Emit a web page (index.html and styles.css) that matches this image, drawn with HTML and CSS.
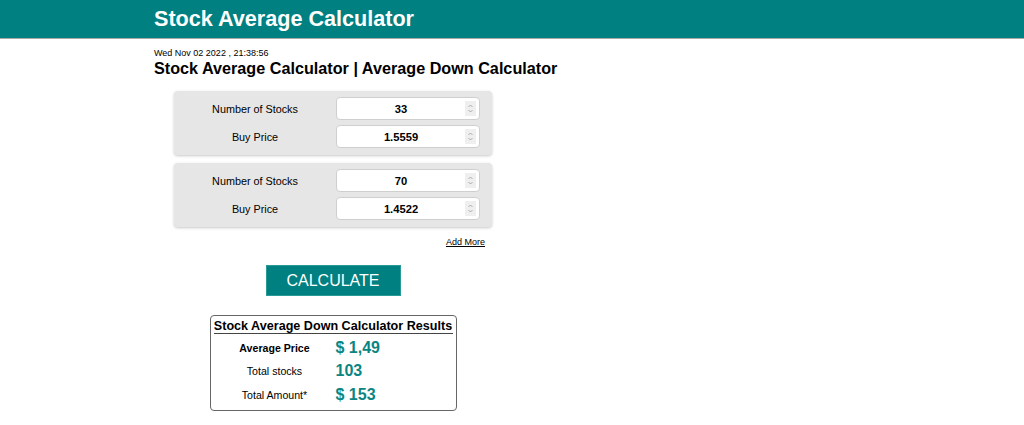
FILE: index.html
```html
<!DOCTYPE html>
<html>
<head>
<meta charset="utf-8">
<link rel="stylesheet" href="styles.css">
</head>
<body>
<header class="topbar"><h1 class="brand">Stock Average Calculator</h1></header>
<main class="page">
  <div class="date">Wed Nov 02 2022 , 21:38:56</div>
  <h2 class="heading">Stock Average Calculator | Average Down Calculator</h2>
  <div class="column">
    <div class="card">
      <div class="row"><span class="label">Number of Stocks</span><div class="field"><span class="val">33</span><span class="spin"><svg width="7" height="11" viewBox="0 0 7 11"><path d="M1.5 4 L3.5 2 L5.5 4 M1.5 7 L3.5 9 L5.5 7" fill="none" stroke="#9a9a9a" stroke-width="0.8"/></svg></span></div></div>
      <div class="row"><span class="label">Buy Price</span><div class="field"><span class="val">1.5559</span><span class="spin"><svg width="7" height="11" viewBox="0 0 7 11"><path d="M1.5 4 L3.5 2 L5.5 4 M1.5 7 L3.5 9 L5.5 7" fill="none" stroke="#9a9a9a" stroke-width="0.8"/></svg></span></div></div>
    </div>
    <div class="card">
      <div class="row"><span class="label">Number of Stocks</span><div class="field"><span class="val">70</span><span class="spin"><svg width="7" height="11" viewBox="0 0 7 11"><path d="M1.5 4 L3.5 2 L5.5 4 M1.5 7 L3.5 9 L5.5 7" fill="none" stroke="#9a9a9a" stroke-width="0.8"/></svg></span></div></div>
      <div class="row"><span class="label">Buy Price</span><div class="field"><span class="val">1.4522</span><span class="spin"><svg width="7" height="11" viewBox="0 0 7 11"><path d="M1.5 4 L3.5 2 L5.5 4 M1.5 7 L3.5 9 L5.5 7" fill="none" stroke="#9a9a9a" stroke-width="0.8"/></svg></span></div></div>
    </div>
    <div class="addrow"><a class="addmore">Add More</a></div>
    <div class="btnrow"><button class="calc">CALCULATE</button></div>
    <div class="results">
      <div class="rtitle">Stock Average Down Calculator Results</div>
      <div class="rgrid">
        <span class="rlabel strong">Average Price</span><span class="rval">$ 1,49</span>
        <span class="rlabel">Total stocks</span><span class="rval">103</span>
        <span class="rlabel">Total Amount*</span><span class="rval">$ 153</span>
      </div>
    </div>
  </div>
</main>
</body>
</html>
```
FILE: styles.css
```css
body {
  margin: 0;
  font-family: "Liberation Sans", Arial, sans-serif;
  color: #000;
  background: #fff;
}
.topbar {
  background: #008080;
  height: 38px;
  border-bottom: 1px solid #a8a8a8;
  padding-left: 154px;
}
.brand {
  margin: 0;
  color: #fff;
  font-size: 21.6px;
  font-weight: bold;
  line-height: 38px;
}
.page {
  padding-left: 154px;
}
.date {
  margin-top: 9px;
  font-size: 9px;
  line-height: 10px;
}
.heading {
  margin: 1px 0 0;
  font-size: 16.2px;
  font-weight: bold;
  line-height: 18px;
}
.column {
  margin-left: 20px;
  margin-top: 14px;
  width: 318px;
  display: flex;
  flex-direction: column;
}
.card {
  background: #e6e6e6;
  border-radius: 4px;
  box-shadow: 0 1px 3px rgba(0,0,0,0.22);
  padding: 6px 12px 7px 0;
  display: flex;
  flex-direction: column;
  gap: 5px;
  margin-bottom: 8px;
}
.row {
  display: flex;
  align-items: center;
}
.label {
  width: 162px;
  text-align: center;
  font-size: 10.8px;
}
.field {
  width: 144px;
  height: 23px;
  box-sizing: border-box;
  background: #fff;
  border: 1px solid #cfcfcf;
  border-radius: 4px;
  display: flex;
  align-items: center;
  padding-right: 3px;
}
.val {
  flex: 1;
  text-align: center;
  font-size: 11.2px;
  font-weight: bold;
}
.spin {
  width: 11px;
  height: 15px;
  background: #efefef;
  display: flex;
  align-items: center;
  justify-content: center;
}
.addrow {
  display: flex;
  justify-content: flex-end;
  padding-right: 7px;
  margin-top: 2px;
}
.addmore {
  font-size: 9px;
  line-height: 10px;
  text-decoration: underline;
  color: #000;
}
.btnrow {
  display: flex;
  justify-content: center;
  margin-top: 18px;
}
.calc {
  width: 135px;
  height: 31px;
  background: #008080;
  color: #fff;
  border: 1px solid #2a9a96;
  font-family: "Liberation Sans", Arial, sans-serif;
  font-size: 16px;
  padding: 0;
}
.results {
  margin: 19px auto 0;
  width: 247px;
  box-sizing: border-box;
  border: 1px solid #666;
  border-radius: 4px;
  padding: 3px 3px 3px;
}
.rtitle {
  font-size: 12.6px;
  font-weight: bold;
  line-height: 14px;
  border-bottom: 1px solid #444;
  text-align: center;
}
.rgrid {
  display: grid;
  grid-template-columns: 122px 1fr;
  grid-auto-rows: 23.5px;
  align-items: center;
  margin-top: 2px;
}
.rlabel {
  text-align: center;
  font-size: 10.6px;
}
.rlabel.strong {
  font-weight: bold;
}
.rval {
  color: #0b8582;
  font-size: 16px;
  font-weight: bold;
}
```
